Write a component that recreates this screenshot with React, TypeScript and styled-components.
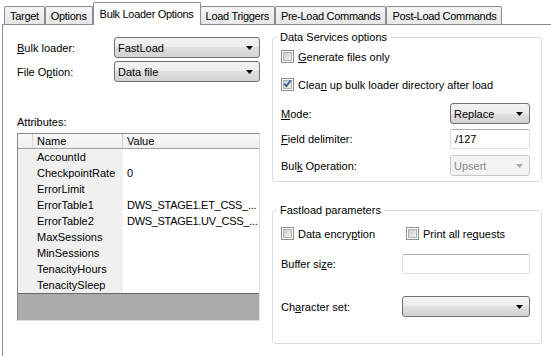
import React from 'react';
import styled, { createGlobalStyle } from 'styled-components';

const GlobalStyle = createGlobalStyle`
  html, body {
    margin: 0;
    padding: 0;
    background: #ffffff;
  }
  body {
    font-family: "Liberation Sans", Arial, sans-serif;
    font-size: 11px;
    color: #000;
  }
`;

const Window = styled.div`
  width: 551px;
  height: 356px;
  overflow: hidden;
  background: #fff;
`;

const TabStrip = styled.div`
  display: flex;
  align-items: flex-end;
  height: 24px;
  padding-left: 4px;
  position: relative;
  z-index: 1;
`;

const Tab = styled.div<{ $active?: boolean }>`
  box-sizing: border-box;
  position: relative;
  display: flex;
  align-items: center;
  white-space: nowrap;
  letter-spacing: -0.3px;
  height: ${p => (p.$active ? 23 : 18)}px;
  padding: ${p => (p.$active ? '0 6px 1px' : '0 5px')};
  margin: ${p => (p.$active ? '0 -1px -1px 0' : '0')};
  border: 1px solid #898c95;
  border-bottom: none;
  border-radius: 2px 2px 0 0;
  background: ${p => (p.$active ? '#fff' : 'linear-gradient(#f5f5f5, #e7e7e7)')};
  z-index: ${p => (p.$active ? 2 : 1)};
`;

const Panel = styled.div`
  box-sizing: border-box;
  width: 600px;
  height: 340px;
  margin-left: 2px;
  border-top: 1px solid #898c95;
  border-left: 1px solid #898c95;
  display: flex;
  gap: 12px;
  padding-left: 14px;
`;

const LeftColumn = styled.div`
  width: 243px;
  padding-top: 12px;
  display: flex;
  flex-direction: column;
`;

const RightColumn = styled.div`
  width: 270px;
  padding-top: 6px;
  display: flex;
  flex-direction: column;
`;

const FormRow = styled.div<{ $gap?: number }>`
  display: flex;
  align-items: center;
  justify-content: space-between;
  margin-top: ${p => p.$gap ?? 0}px;
`;

const Label = styled.span`
  white-space: nowrap;
`;

const Combo = styled.div<{ $width: number; $disabled?: boolean }>`
  box-sizing: border-box;
  width: ${p => p.$width}px;
  height: 21px;
  display: flex;
  align-items: center;
  justify-content: space-between;
  padding: 0 6px 0 3px;
  border: 1px solid ${p => (p.$disabled ? '#c5c7c9' : '#707070')};
  border-radius: 3px;
  background: ${p =>
    p.$disabled
      ? '#f4f4f4'
      : 'linear-gradient(#f3f3f3 0%, #ececec 50%, #dfdfdf 50%, #d3d3d3 100%)'};
  color: ${p => (p.$disabled ? '#8a8a8a' : '#000')};
`;

const TextBox = styled.div<{ $width: number }>`
  box-sizing: border-box;
  width: ${p => p.$width}px;
  height: 20px;
  display: flex;
  align-items: center;
  padding: 0 4px;
  border: 1px solid #dbdfe6;
  border-top-color: #abadb3;
  border-radius: 2px;
  background: #fff;
`;

const SectionLabel = styled.div`
  margin-top: 34px;
  line-height: 13px;
`;

const Grid = styled.div`
  box-sizing: border-box;
  margin-top: 4px;
  width: 243px;
  border: 1px solid #828790;
  border-right-color: #dedede;
  border-bottom-color: #dedede;
  display: flex;
  flex-direction: column;
`;

const HeadRow = styled.div`
  box-sizing: border-box;
  display: grid;
  grid-template-columns: 15px 90px 1fr;
  height: 15px;
  border-bottom: 1px solid #a0a0a0;
  background: linear-gradient(#f9f9f9, #efefef);
`;

const HeadCell = styled.div<{ $last?: boolean }>`
  line-height: 14px;
  padding-left: 4px;
  border-right: ${p => (p.$last ? 'none' : '1px solid #d5d5d5')};
`;

const Row = styled.div`
  display: grid;
  grid-template-columns: 15px 90px 1fr;
  height: 16px;
  line-height: 16px;
`;

const RowHead = styled.div`
  background: #f0f0f0;
`;

const NameCell = styled.div`
  background: #f0f0f0;
  padding-left: 4px;
  white-space: nowrap;
`;

const ValueCell = styled.div`
  background: #fff;
  padding-left: 4px;
  white-space: nowrap;
  overflow: hidden;
  letter-spacing: -0.3px;
`;

const EmptyArea = styled.div`
  height: 26px;
  border-top: 1px solid #696969;
  background: #ababab;
`;

const Group = styled.fieldset<{ $pad: string; $gap?: number }>`
  box-sizing: border-box;
  min-width: 0;
  width: 270px;
  margin: ${p => p.$gap ?? 0}px 0 0;
  padding: ${p => p.$pad};
  border: 1px solid #d5dfe5;
  border-radius: 3px;
`;

const Legend = styled.legend`
  padding: 0 3px;
  margin-left: -4px;
  line-height: 13px;
`;

const CheckRow = styled.label<{ $gap?: number }>`
  display: flex;
  align-items: center;
  gap: 4px;
  height: 13px;
  margin-top: ${p => p.$gap ?? 0}px;
  white-space: nowrap;
`;

const CheckPair = styled.div`
  display: grid;
  grid-template-columns: 125px auto;
`;

const Box = styled.span`
  box-sizing: border-box;
  flex: none;
  width: 13px;
  height: 13px;
  border: 1px solid #8e8f8f;
  padding: 1px;
  background: #fff;
  display: flex;
`;

const BoxInner = styled.span`
  flex: 1;
  position: relative;
  border: 1px solid #aeb1b5;
  background: linear-gradient(135deg, #c9ccd1, #f4f4f4);
`;

const Tick = styled.svg`
  position: absolute;
  left: -2px;
  top: -3px;
`;

const Arrow = ({ disabled }: { disabled?: boolean }) => (
  <svg width="7" height="4" viewBox="0 0 7 4">
    <path d="M0 0H7L3.5 4Z" fill={disabled ? '#a8a8a8' : '#000'} />
  </svg>
);

const Check = ({ checked, children, gap }: { checked?: boolean; children: React.ReactNode; gap?: number }) => (
  <CheckRow $gap={gap}>
    <Box>
      <BoxInner>
        {checked && (
          <Tick width="11" height="11" viewBox="0 0 11 11">
            <path d="M2.2 5.8 L4.3 8.2 L8.8 2.2" fill="none" stroke="#3d5a8c" strokeWidth="1.8" strokeLinejoin="round" />
          </Tick>
        )}
      </BoxInner>
    </Box>
    <span>{children}</span>
  </CheckRow>
);

const tabs = ['Target', 'Options', 'Bulk Loader Options', 'Load Triggers', 'Pre-Load Commands', 'Post-Load Commands'];

const attributes: [string, string][] = [
  ['AccountId', ''],
  ['CheckpointRate', '0'],
  ['ErrorLimit', ''],
  ['ErrorTable1', 'DWS_STAGE1.ET_CSS_...'],
  ['ErrorTable2', 'DWS_STAGE1.UV_CSS_...'],
  ['MaxSessions', ''],
  ['MinSessions', ''],
  ['TenacityHours', ''],
  ['TenacitySleep', ''],
];

export default function App() {
  return (
    <>
      <GlobalStyle />
      <Window>
        <TabStrip>
          {tabs.map(t => (
            <Tab key={t} $active={t === 'Bulk Loader Options'}>
              {t}
            </Tab>
          ))}
        </TabStrip>
        <Panel>
          <LeftColumn>
            <FormRow>
              <Label>
                <u>B</u>ulk loader:
              </Label>
              <Combo $width={146}>
                <span>FastLoad</span>
                <Arrow />
              </Combo>
            </FormRow>
            <FormRow $gap={3}>
              <Label>
                File O<u>p</u>tion:
              </Label>
              <Combo $width={146}>
                <span>Data file</span>
                <Arrow />
              </Combo>
            </FormRow>
            <SectionLabel>Attributes:</SectionLabel>
            <Grid>
              <HeadRow>
                <HeadCell />
                <HeadCell>Name</HeadCell>
                <HeadCell $last>Value</HeadCell>
              </HeadRow>
              {attributes.map(([name, value]) => (
                <Row key={name}>
                  <RowHead />
                  <NameCell>{name}</NameCell>
                  <ValueCell>{value}</ValueCell>
                </Row>
              ))}
              <EmptyArea />
            </Grid>
          </LeftColumn>

          <RightColumn>
            <Group $pad="6px 11px 5px 8px">
              <Legend>Data Services options</Legend>
              <Check>
                <u>G</u>enerate files only
              </Check>
              <Check checked gap={15}>
                Clea<u>n</u> up bulk loader directory after load
              </Check>
              <FormRow $gap={12}>
                <Label>
                  <u>M</u>ode:
                </Label>
                <Combo $width={80}>
                  <span>Replace</span>
                  <Arrow />
                </Combo>
              </FormRow>
              <FormRow $gap={5}>
                <Label>
                  <u>F</u>ield delimiter:
                </Label>
                <TextBox $width={80}>/127</TextBox>
              </FormRow>
              <FormRow $gap={6}>
                <Label>
                  Bul<u>k</u> Operation:
                </Label>
                <Combo $width={80} $disabled>
                  <span>Upsert</span>
                  <Arrow disabled />
                </Combo>
              </FormRow>
            </Group>

            <Group $pad="10px 11px 26px 8px" $gap={22}>
              <Legend>Fastload parameters</Legend>
              <CheckPair>
                <Check>
                  Data encry<u>p</u>tion
                </Check>
                <Check>
                  Print all re<u>q</u>uests
                </Check>
              </CheckPair>
              <FormRow $gap={14}>
                <Label>
                  Buffer si<u>z</u>e:
                </Label>
                <TextBox $width={128} />
              </FormRow>
              <FormRow $gap={22}>
                <Label>
                  Ch<u>a</u>racter set:
                </Label>
                <Combo $width={128}>
                  <span />
                  <Arrow />
                </Combo>
              </FormRow>
            </Group>
          </RightColumn>
        </Panel>
      </Window>
    </>
  );
}
